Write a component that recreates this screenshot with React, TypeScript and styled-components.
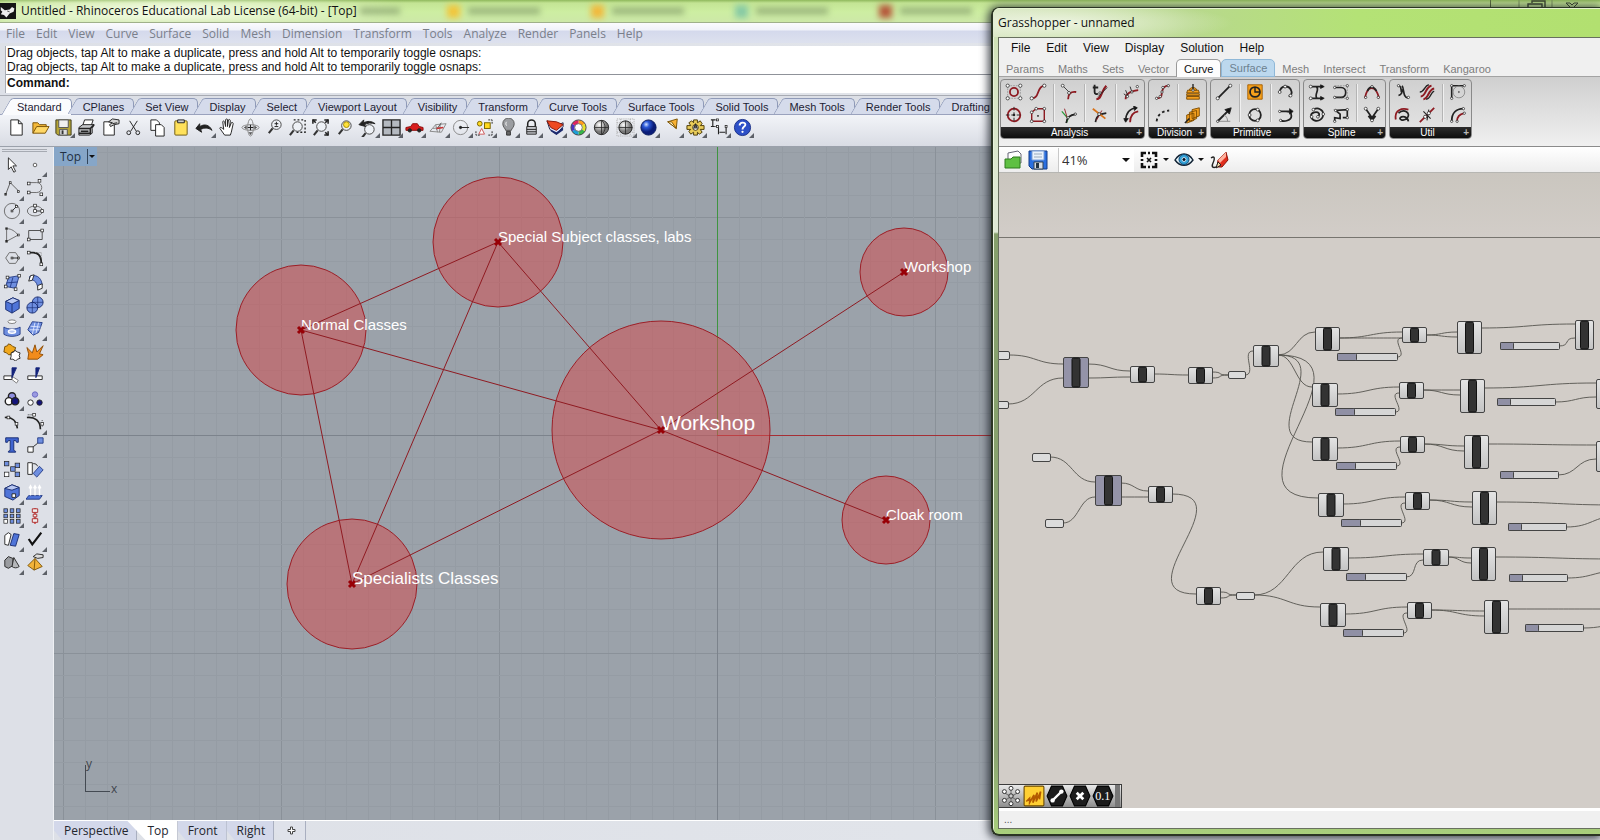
import React from "react";
import styled, { createGlobalStyle, css } from "styled-components";

const ui = `"Open Sans", "Noto Sans", sans-serif`;
const arial = `"Liberation Sans", Arial, sans-serif`;

const Global = createGlobalStyle`
  *, *::before, *::after { box-sizing: border-box; }
  body { margin: 0; background: #dde0e7; font-family: ${arial}; color: #111; }
  button, input, select { font: inherit; color: inherit; border: 0; padding: 0; margin: 0; background: none; }
`;

/* ---------- icons ---------- */

const Svg = styled.svg<{ $size?: number }>`
  display: block;
  flex: none;
  width: ${(p) => p.$size ?? 20}px;
  height: ${(p) => p.$size ?? 20}px;
`;

const Icon = ({ children, size }: { children: React.ReactNode; size?: number }) => (
  <Svg viewBox="0 0 20 20" $size={size} fill="none" stroke="#222" strokeWidth={1} aria-hidden="true">
    {children}
  </Svg>
);

const Dots = ({ at, r = 1.3, fill = "#fff" }: { at: number[][]; r?: number; fill?: string }) => (
  <>
    {at.map(([x, y], i) => (
      <circle key={i} cx={x} cy={y} r={r} fill={fill} stroke="#222" strokeWidth={0.8} />
    ))}
  </>
);

const Sq = ({ at, s = 3, fill = "#fff" }: { at: number[][]; s?: number; fill?: string }) => (
  <>
    {at.map(([x, y], i) => (
      <rect key={i} x={x - s / 2} y={y - s / 2} width={s} height={s} fill={fill} stroke="#222" strokeWidth={0.8} />
    ))}
  </>
);

const Lens = ({ x = 11, y = 8 }: { x?: number; y?: number }) => (
  <>
    <circle cx={x} cy={y} r={5} fill="#eef1f6" stroke="#444" />
    <path d={`M${x - 4} ${y + 4}L${x - 8} ${y + 9}`} stroke="#333" strokeWidth={2.2} />
  </>
);

type Tool = { name: string; art: React.ReactNode; more?: boolean };

const standardTools: Tool[] = [
  { name: "New", art: <path d="M4 2h8l4 4v12H4zM12 2v4h4" fill="#fff" /> },
  {
    name: "Open",
    art: (
      <>
        <path d="M2 16V5h5l2 2h7v3" fill="#f5b93a" stroke="#7a5206" />
        <path d="M2 16l4-7h13l-4 7z" fill="#ffd766" stroke="#7a5206" />
      </>
    ),
  },
  {
    name: "Save",
    more: true,
    art: (
      <>
        <path d="M2 2h16v16H4l-2-2z" fill="#b5a436" stroke="#3c3a1c" />
        <path d="M5 2h10v8H5z" fill="#f0f0ee" stroke="#555" />
        <path d="M6 12h8v6H6z" fill="#ddd" stroke="#555" />
        <path d="M8 13h2v4H8z" fill="#333" stroke="none" />
      </>
    ),
  },
  {
    name: "Print",
    art: (
      <>
        <path d="M6 8l2-6h9l-2 6" fill="#fff" />
        <path d="M2 10l4-3h12l-2 4v5l-3 2H2z" fill="#c5c7ca" />
        <path d="M2 11h12l4-4M14 11v6M4 14h8M2 16h12" strokeWidth={1.6} />
      </>
    ),
  },
  {
    name: "Properties",
    art: (
      <>
        <path d="M3 4h11v14H3z" fill="#fff" />
        <path d="M8 4l4-3 7 1v4l-5 1-4 2-1-2 3-2z" fill="#d5d5d5" />
        <path d="M12 6l5-1" />
      </>
    ),
  },
  {
    name: "Cut",
    art: (
      <>
        <path d="M6 3l7 11M14 3L7 14" />
        <circle cx={5} cy={15.5} r={2} />
        <circle cx={14.5} cy={15.5} r={2} />
      </>
    ),
  },
  { name: "Copy", art: <><path d="M3 2h6l3 3v8H3z" fill="#fff" /><path d="M8 7h6l3 3v9H8z" fill="#fff" /></> },
  {
    name: "Paste",
    art: (
      <>
        <rect x={4} y={3} width={13} height={15} rx={1} fill="#ffe15a" stroke="#6d5a12" />
        <path d="M7 2h7v3H7z" fill="#ccc" />
      </>
    ),
  },
  { name: "Undo", more: true, art: <path d="M2 11l4-5v3c5-3 10-2 13 4-4-3-8-3-12-1l1 3z" fill="#222" /> },
  {
    name: "Pan",
    art: <path d="M7 18l-5-7c0-2 2-1 4 1L5 4c1-2 2-1 3 5V2c1-2 2-1 2 0v7l1-7c1-1 2 0 2 1l-1 7 2-5c1-1 2 0 2 1l-2 9-1 3z" fill="#fff" />,
  },
  {
    name: "Rotate View",
    art: (
      <>
        <ellipse cx={10} cy={10} rx={9} ry={3} stroke="#888" />
        <ellipse cx={10} cy={10} rx={3} ry={9} stroke="#888" />
        <path d="M10 7v6M7 10h6" strokeWidth={1.2} />
        <path d="M6 8l-3 2 3 2M14 8l3 2-3 2M8 15l2 3 2-3" fill="#555" stroke="none" />
      </>
    ),
  },
  { name: "Zoom Dynamic", art: <><Lens x={12} y={7} /><path d="M10 6h4M12 4v4M10 9h4" /></> },
  { name: "Zoom Window", art: <><path d="M6 2h12v13H9" strokeDasharray="2 2" strokeWidth={1.4} /><Lens x={10} y={9} /></> },
  {
    name: "Zoom Extents",
    art: (
      <>
        <Lens x={11} y={9} />
        <path d="M2 6V2h4M14 2h4v4M18 14v4h-4" strokeWidth={1.6} />
        <path d="M2 2l3 3M18 2l-3 3M18 18l-3-3" strokeWidth={1.6} />
      </>
    ),
  },
  { name: "Zoom Selected", art: <><Lens x={12} y={8} /><circle cx={12} cy={7} r={3} fill="#ffe23c" stroke="#a58a00" /></> },
  { name: "Undo View", more: true, art: <><Lens x={12} y={12} /><path d="M1 7l5-5v3c4-2 8-2 12 1-4-1-8-1-11 1l1 2z" fill="#222" /></> },
  { name: "Viewports", more: true, art: <path d="M1 2h18v16H1zM10 2v16M1 10h18" fill="#b4b9c0" strokeWidth={1.4} /> },
  {
    name: "Named Views",
    more: true,
    art: (
      <>
        <path d="M1 10l5-1 2-3h5l2 3 4 1v3H1z" fill="#d81e1e" stroke="#8c0d0d" />
        <circle cx={5} cy={13} r={1.8} fill="#222" />
        <circle cx={15} cy={13} r={1.8} fill="#222" />
      </>
    ),
  },
  {
    name: "CPlane",
    more: true,
    art: (
      <>
        <path d="M1 14l6-7 11-1-5 9zM4 11l11-1M7 7l2 8M12 6l-1 9" stroke="#888" />
        <path d="M8 12l5-7" stroke="#555" />
        <path d="M8 11l7-1" stroke="#c33" strokeWidth={1.6} />
      </>
    ),
  },
  { name: "Object Snap", more: true, art: <><circle cx={9} cy={10} r={7.5} stroke="#888" /><path d="M9 10h9" /><circle cx={9} cy={10} r={1.2} fill="#222" /></> },
  {
    name: "Select Objects",
    more: true,
    art: (
      <>
        <circle cx={5} cy={6} r={2.5} fill="#ffd91f" stroke="#776300" />
        <rect x={10} y={5} width={6} height={6} fill="#ffd91f" stroke="#776300" />
        <path d="M7 11l3 6H4z" stroke="#c55" fill="#fff" />
        <path d="M14 2h4v4M1 14v4h4M18 14v4h-4" strokeDasharray="2 1" />
      </>
    ),
  },
  {
    name: "Hide",
    more: true,
    art: (
      <>
        <path d="M7 13c0-2-3-3-3-7a6 6 0 0 1 12 0c0 4-3 5-3 7z" fill="#9b9da1" stroke="#555" />
        <path d="M8 14h4v4H8z" fill="#666" stroke="#333" />
        <path d="M8 4c-1 1-1 3 0 4" stroke="#fff" />
      </>
    ),
  },
  { name: "Lock", more: true, art: <><path d="M6 9V6a4 4 0 0 1 8 0v3" strokeWidth={1.6} /><path d="M5 9h10v8H5zM5 12h10M5 14.5h10" fill="#c9cbd0" /></> },
  {
    name: "Layers",
    more: true,
    art: (
      <>
        <path d="M1 3l10 5 7-3v4l-7 8L4 12z" fill="#dfe8ff" stroke="#224" />
        <path d="M1 3l10 1 7 3-7 6-6-3z" fill="#ee4a22" stroke="#8b1707" />
        <path d="M5 12l6 3 7-5v3l-7 5-6-4z" fill="#1c2a6d" stroke="none" />
      </>
    ),
  },
  {
    name: "Colors",
    more: true,
    art: (
      <g strokeWidth={3.4}>
        <path d="M10 4a6 6 0 0 1 5.2 3" stroke="#ff9d1e" />
        <path d="M15.2 7a6 6 0 0 1 0 6" stroke="#e5e12a" />
        <path d="M15.2 13A6 6 0 0 1 10 16" stroke="#37b54a" />
        <path d="M10 16a6 6 0 0 1-5.2-3" stroke="#1c9fd6" />
        <path d="M4.8 13a6 6 0 0 1 0-6" stroke="#4a34c4" />
        <path d="M4.8 7A6 6 0 0 1 10 4" stroke="#e0245e" />
        <circle cx={10} cy={10} r={8} strokeWidth={0.8} />
        <circle cx={10} cy={10} r={4} strokeWidth={0.6} fill="#fff" />
      </g>
    ),
  },
  {
    name: "Shaded",
    art: (
      <>
        <circle cx={10} cy={10} r={7.5} fill="url(#greyBall)" />
        <path d="M10 2.5v15M2.5 10h15M10 2.5c5 4 5 11 0 15" strokeWidth={0.8} />
      </>
    ),
  },
  {
    name: "Ghosted",
    more: true,
    art: (
      <>
        <path d="M1 1h18v18H1zM1 5h18M1 10h18M1 15h18M5 1v18M15 1v18" stroke="#aaa" strokeDasharray="1 1" />
        <circle cx={10} cy={10} r={7} fill="url(#greyBall)" />
        <path d="M10 3v14M3 10h14" strokeWidth={0.8} />
      </>
    ),
  },
  { name: "Render", more: true, art: <circle cx={10} cy={10} r={8} fill="url(#blueBall)" stroke="#0a1a5c" /> },
  { name: "Lights", more: true, art: <><path d="M5 4L15 1l-1 10z" fill="#f9b233" stroke="#7b5200" /><path d="M5 4l4 0 5 7z" fill="#fff2c4" stroke="#7b5200" /></> },
  {
    name: "Options",
    more: true,
    art: (
      <>
        <path d="M8 2h4v3l3-2 2 3-2 2h4v4h-4l2 3-3 2-2-2v3H8v-3l-3 2-2-3 2-2H1V8h4L3 5l3-2 2 2z" fill="#e9cc5a" stroke="#4b3a05" />
        <circle cx={10} cy={10} r={3} fill="#f7f7f7" stroke="#4b3a05" />
        <path d="M8 11l2-5 2 5" fill="#555" />
      </>
    ),
  },
  {
    name: "Dimension",
    more: true,
    art: <><path d="M2 2h5M4 2v7M2 9h4M10 9v8M18 9v8M11 15h6" strokeWidth={1.2} /><path d="M6 9h4" strokeDasharray="1 1" /><Sq s={2} at={[[9, 2], [9, 9], [18, 9]]} /></>,
  },
  {
    name: "Help",
    more: true,
    art: (
      <>
        <circle cx={10} cy={10} r={8.5} fill="#2d50c8" stroke="#1a2f86" />
        <path d="M7 8c0-4 6-4 6-1 0 2-3 2-3 5" stroke="#fff" strokeWidth={2} />
        <circle cx={10} cy={14.5} r={1.2} fill="#fff" stroke="none" />
      </>
    ),
  },
];

const blue = "#6f8fe0";
const pale = "#b9c8f2";

const sideTools: Tool[] = [
  { name: "Pointer", art: <path d="M6 2v13l3-3 3 6 2-1-3-6h4z" fill="#fff" /> },
  { name: "Point", more: true, art: <circle cx={10} cy={10} r={2} fill="#fff" stroke="#555" /> },
  { name: "Polyline", more: true, art: <><path d="M3 17L8 4l10 10" stroke="#555" /><Sq s={2} at={[[3, 17], [8, 4], [17, 14]]} /></> },
  { name: "Curve", more: true, art: <><path d="M4 4h8a5 5 0 0 1 0 11H4" stroke="#666" /><Sq at={[[3, 5], [3, 15], [15, 2], [17, 17]]} /></> },
  { name: "Circle", more: true, art: <><circle cx={10} cy={10} r={8.5} stroke="#666" /><path d="M10 10l5-5" /><Sq s={2} at={[[10, 10], [15, 5]]} /></> },
  { name: "Ellipse", more: true, art: <><ellipse cx={10} cy={10} rx={8.5} ry={5.5} stroke="#666" /><path d="M10 10V5M10 10h8" /><Sq at={[[10, 4], [10, 10], [18, 10]]} /></> },
  { name: "Arc", more: true, art: <><path d="M4 17V3M4 3c6 0 9 3 13 7L4 17" stroke="#666" /><Sq s={2} at={[[4, 3], [17, 10], [4, 17]]} /></> },
  { name: "Rectangle", more: true, art: <><path d="M3 5h15v10H3z" stroke="#444" /><Sq at={[[18, 5], [3, 15]]} /></> },
  { name: "Polygon", more: true, art: <><path d="M3 10l4-6h7l4 6-4 6H7z" stroke="#666" /><path d="M10 10h7" /><Sq s={2} at={[[10, 10], [17, 10]]} /></> },
  { name: "Fillet", more: true, art: <><path d="M4 4h4c6 0 9 4 9 12" strokeWidth={2} /><path d="M10 4h7v6" stroke="#888" strokeDasharray="1 1" /><Sq at={[[3, 4], [17, 17]]} /></> },
  { name: "Surface Corners", more: true, art: <><path d="M6 5l12-2-4 14-11-2z" fill={blue} stroke="#223a86" /><path d="M4 11l12-1M11 5L8 16" stroke="#223a86" /><Sq at={[[5, 5], [18, 3], [3, 15], [14, 18]]} /></> },
  { name: "Sweep", more: true, art: <><path d="M4 4C10 1 17 4 18 13l-5 3C12 9 8 7 4 8z" fill={blue} stroke="#223a86" /><path d="M3 9l2-6 4-1-2 6zM13 19v-5l5-2v5z" fill="#fff" /></> },
  { name: "Box", more: true, art: <><path d="M3 6l8-4 7 3v9l-8 5-7-4z" fill="#4f74d8" stroke="#162a6e" /><path d="M3 6l8-4 7 3-8 4z" fill={pale} stroke="#162a6e" /><path d="M10 9v10" stroke="#162a6e" /></> },
  { name: "Boolean", more: true, art: <><circle cx={13} cy={7} r={6} fill={blue} stroke="#162a6e" /><circle cx={7} cy={13} r={6} fill={blue} stroke="#162a6e" /><path d="M1 13h12M7 7v12M13 1v12M7 7h12" stroke="#162a6e" strokeWidth={0.7} /></> },
  { name: "Patch", more: true, art: <><ellipse cx={10} cy={3} rx={4.5} ry={2} fill="#fff" stroke="#777" /><path d="M1 9c5 3 13 3 18 0v8c-5 3-13 3-18 0z" fill={blue} stroke="#223a86" /><ellipse cx={10} cy={14} rx={4} ry={2} stroke="#fff" fill={pale} strokeWidth={1.6} /></> },
  { name: "Rebuild", more: true, art: <><path d="M2 12l5-9 11 1-4 11-6 3z" fill={blue} stroke="#223a86" /><path d="M5 8l11 1M4 12h11M10 4l-3 13M14 4l-3 12" stroke="#dfe6ff" /></> },
  { name: "Join", art: <><path d="M2 4l3-1 1-2 3 1 2 2 3 1-1 4-3 1 0 3-4 0-2-2-3-1z" fill="#f0a81e" stroke="#6d4600" /><path d="M9 11l3-1 1-2 3 2 3 1-1 3 1 3-3 1-2 2-3-2-3 0 1-3z" fill="#fff" /></> },
  { name: "Explode", art: <path d="M2 18L3 12 1 5l6 6 3-9 2 8 7-7-4 9 4 1-6 5z" fill="#f28c1c" stroke="#8a4800" /> },
  { name: "Trim", art: <><path d="M1 11h9v4H1z" fill="#fff" /><path d="M11 12l6 4-2 3-5-4z" fill="#fff" stroke="#777" /><path d="M10 13V2h5z" fill="#14247a" stroke="#14247a" /></> },
  { name: "Split", art: <><path d="M2 11h16v4H2z" fill="#fff" /><path d="M11 13V2h4z" fill="#14247a" stroke="#14247a" /></> },
  { name: "Group", more: true, art: <><circle cx={10} cy={7} r={4} fill="#8f8fe0" strokeWidth={1.6} /><circle cx={6.5} cy={12.5} r={4} fill="#fff" strokeWidth={1.6} /><circle cx={13.5} cy={12.5} r={4} fill="#14147a" strokeWidth={1.6} /></> },
  { name: "Ungroup", art: <><circle cx={10} cy={5} r={3} fill="#9a9ae0" stroke="#6464c0" /><circle cx={5} cy={14} r={3} fill="#fff" /><circle cx={15} cy={14} r={3} fill="#14147a" /></> },
  { name: "Edit Points", art: <><path d="M2 5c8-1 13 4 14 12" strokeWidth={1.8} /><Sq at={[[6, 5], [15, 12]]} /></> },
  { name: "Control Points", more: true, art: <><path d="M1 5c9-1 15 4 15 13" strokeWidth={1.8} /><path d="M2 2h8M18 8v8" strokeDasharray="1 1" /><Sq at={[[9, 2], [18, 12]]} /></> },
  { name: "Text", art: <path d="M3 2h14v5h-2l-1-2h-2v11l2 1v1H6v-1l2-1V5H6L5 7H3z" fill="#3f64d0" stroke="#162a6e" /> },
  { name: "Move", more: true, art: <><path d="M2 12h6v6H2z" fill="#fff" /><path d="M13 2h6v6h-6z" fill={blue} stroke="#223a86" /><path d="M8 12l5-4" /></> },
  { name: "Copy Objects", art: <><Sq s={5} fill="#fff" at={[[4, 16]]} /><Sq s={5} fill={blue} at={[[4, 4], [16, 6], [11, 10], [16, 16]]} /></> },
  { name: "Rotate", art: <><path d="M2 3h5v13H2z" fill="#fff" /><path d="M8 15l7-8 4 4-7 8z" fill={blue} stroke="#223a86" /><path d="M8 4c3 0 4 1 5 3" /></> },
  { name: "Solid Edit", more: true, art: <><path d="M2 6l8-4 8 3v9l-7 5-9-4z" fill="#4f74d8" stroke="#162a6e" /><path d="M2 6l8-4 8 3-8 3z" fill={pale} stroke="#162a6e" /><path d="M10 12h4v4h-4z" fill="#fff" /></> },
  { name: "Project", more: true, art: <><path d="M3 14h15l-3 4H0z" fill="#4f74d8" stroke="#223a86" /><path d="M5 14V4M10 14V4M15 14V4M3.5 6L5 3l1.5 3M8.5 6L10 3l1.5 3M13.5 6L15 3l1.5 3" stroke="#fff" strokeWidth={1.5} /></> },
  { name: "Array", more: true, art: <><Sq s={4} fill={blue} at={[[3, 4], [10, 4], [17, 4], [3, 10], [10, 10], [17, 10], [10, 16], [17, 16]]} /><Sq s={4} at={[[3, 16]]} /></> },
  { name: "Align", more: true, art: <><path d="M10 1v18" stroke="#c22" strokeWidth={1.4} /><path d="M7 2h6v4H7zM8 8h4v3H8zM7 13h6v4H7z" fill="#eee" stroke="#a22" /></> },
  { name: "Flow", more: true, art: <><path d="M2 6l4-3 3 2-3 12-4-1z" fill="#fff" /><path d="M8 17l4-13 6 1-4 13z" fill="#4f74d8" stroke="#162a6e" /></> },
  { name: "Check", more: true, art: <path d="M3 10l4 6L17 3" strokeWidth={2.4} stroke="#111" /> },
  { name: "Mesh", more: true, art: <><path d="M2 8l4-4 5 2v8l-5 3-4-2z" fill="#9a9ca0" /><path d="M12 5l6 10c-2 2-6 2-8 0z" fill="#b5b7ba" /></> },
  { name: "Drape", more: true, art: <><path d="M10 6l8 9-9 4-7-5z" fill="#f2b33a" stroke="#7a5206" /><path d="M10 6l-1 13" stroke="#7a5206" /><path d="M8 4l4-3 7 1v3l-6 1z" fill="#ddd" /></> },
];

const red = "#8e1b22";
const K = 1.9;

const ribbonIcons: Record<string, React.ReactNode> = {
  frame: <><circle cx={10} cy={10} r={4.5} stroke={red} strokeWidth={2} /><path d="M3 3h14v14H3z" stroke="#999" strokeDasharray="2 1" /><Dots r={1.8} at={[[3, 3], [17, 3], [3, 17], [17, 17]]} /></>,
  circleCenter: <><circle cx={10} cy={10} r={7} stroke={red} strokeWidth={2} /><path d="M10 1v18M1 10h18" strokeDasharray="4 2" /><Dots r={1} fill="#111" at={[[10, 10]]} /></>,
  endPts: <><path d="M4 17c8 0 4-13 13-14" stroke={red} strokeWidth={2} /><Dots r={1.8} at={[[3, 17], [17, 3]]} /></>,
  polyCenter: <><path d="M3 17V7l5-4h9v14z" stroke={red} strokeWidth={1.6} /><Dots r={1.5} at={[[3, 17], [3, 7], [8, 3], [17, 3], [17, 17]]} /><Dots r={0.6} fill="#111" at={[[10, 11]]} /></>,
  closest: <><path d="M3 3l7 7" stroke="#333" /><path d="M9 18c0-6 3-9 9-8" stroke={red} strokeWidth={2} /><Dots r={1.6} at={[[3, 3], [10, 11]]} /></>,
  derive: <><path d="M2 6l7 8-2 5" stroke="#2a9a3c" strokeWidth={1.4} /><path d="M7 19c0-6 3-9 11-10" strokeWidth={K} /><path d="M8 13L5 3" stroke={red} /><Dots at={[[9, 13], [17, 9]]} /></>,
  evalCurve: <><path d="M4 2v8c0 2 2 3 4 2M2 5h6" strokeWidth={2} /><path d="M6 18c6 0 5-9 11-15" stroke={red} strokeWidth={2.4} /><path d="M8 15L18 5" /><Dots at={[[10, 11]]} /></>,
  perp: <><path d="M5 18c1-7 4-9 12-10" strokeWidth={K} /><path d="M2 3l14 11" stroke="#d8731a" strokeWidth={2} /><path d="M12 5L6 16" stroke={red} /><Dots r={1.6} at={[[9, 9]]} /></>,
  segs: <><path d="M4 18c0-6 5-9 14-10" stroke={red} strokeWidth={2} /><path d="M4 8l3 7M9 4l2 6M2 12l4 3" /><Dots at={[[11, 10], [17, 4], [6, 15]]} /></>,
  length: <><path d="M9 18c0-7 3-11 9-12" stroke={red} strokeWidth={2} /><path d="M4 17C4 8 8 3 16 2" strokeWidth={1.6} /><path d="M2 14l2 4 3-4zM13 0l4 2-3 3z" fill="#111" /></>,
  divide: <><path d="M4 17c7 0 5-4 6-7s1-7 8-7" stroke={red} strokeWidth={2} /><Dots at={[[4, 17], [8, 15], [10, 10], [11, 5], [17, 3]]} /></>,
  dash: <path d="M4 17c1-6 4-11 14-12" strokeWidth={2} strokeDasharray="3 3" />,
  contour: <><path d="M4 8h12l1 3H3zM3 12h14v2H3zM3 15h14v3H3z" fill="#f5a01e" stroke="#7a4b00" /><path d="M6 8c0-4 8-4 8 0z" fill="#f5a01e" stroke="#7a4b00" /><path d="M10 1v7" strokeWidth={1.5} /><Dots at={[[10, 8]]} /></>,
  frames: <><path d="M9 4l8-2v9l-8 3zM6 7l8-2v9l-8 3zM3 10l8-2v8l-8 3z" fill="#f5a01e" stroke="#7a4b00" /><path d="M1 19l5-5" strokeWidth={1.6} /></>,
  line: <><path d="M3 17L17 3" strokeWidth={2} /><Dots r={1.7} at={[[3, 17], [17, 3]]} /></>,
  lineSDL: <><path d="M3 17L16 4" strokeWidth={2.2} /><path d="M3 17h14M14 17c0-4-2-6-4-7" stroke="#888" /><path d="M18 2l-2 7-5-5z" fill="#111" /><Dots at={[[3, 17]]} /></>,
  clock: <><path d="M2 2h16v16H2z" fill="#f7a11b" stroke="#a35c00" /><circle cx={10} cy={10} r={5.5} strokeWidth={2} /><path d="M10 5v5h5" strokeWidth={1.6} /></>,
  circle3: <><circle cx={10} cy={10} r={6.5} strokeWidth={2} /><Dots r={1.6} at={[[4, 10], [13, 4], [13, 16]]} /></>,
  arc3: <><path d="M3 10c1-8 11-8 13-1 1 3-1 5-3 6" strokeWidth={2} /><Dots r={1.6} at={[[3, 10], [15, 14], [9, 4]]} /></>,
  arcTan: <><path d="M3 6h12M4 16c4 2 12 0 12-5S13 6 10 6" strokeWidth={2} /><path d="M14 3l4 3-4 3z" fill="#111" /><Dots at={[[3, 6], [4, 16]]} /></>,
  sdl: <><path d="M4 4h12M4 17h12M9 4c5 3-3 9 1 13" strokeWidth={K} /><Dots r={1.6} at={[[3, 4], [3, 17]]} /><path d="M14 2l4 2-4 2zM14 15l4 2-4 2z" fill="#111" /></>,
  knot: <><path d="M6 4c5-3 11 0 11 5s-5 9-10 7-5-8 0-9 7 2 4 5" strokeWidth={K} /><Dots r={1.5} at={[[6, 4], [17, 9], [4, 12], [11, 12]]} /></>,
  bezier: <><path d="M3 5h7c7 0 7 11 0 11H3" strokeWidth={K} /><path d="M3 3h14v14H3" stroke="#999" strokeDasharray="2 1" /><Dots at={[[3, 5], [3, 16], [17, 3], [17, 17]]} /></>,
  polyline: <><path d="M3 17v-4l6 1V9L4 5l13-1v9h-5" strokeWidth={K} /><Dots at={[[3, 17], [4, 5], [17, 4], [17, 13]]} /></>,
  catenary: <><path d="M2 17C5 2 14 2 18 17" stroke={red} strokeWidth={2} /><path d="M5 9c2-6 7-6 10 0" strokeWidth={2} /><Dots at={[[3, 16], [17, 16], [10, 4]]} /></>,
  tanArc: <><path d="M3 3l7 10 7-10M6 11l4 5 4-5" strokeWidth={K} /><Dots r={1.6} at={[[3, 3], [17, 3], [10, 16]]} /></>,
  flip: <><path d="M5 3c5 1 1 5 4 8M5 14c3-1 5-4 4-7M9 3c3 4 0 13 7 14" strokeWidth={1.8} /><Dots at={[[5, 3], [16, 16]]} /></>,
  offset: <><path d="M3 15c6 0 5-11 12-12M6 18c6 0 5-11 12-12" stroke={red} strokeWidth={2.2} /><path d="M2 10c5 0 5-7 10-8M9 18c5 0 5-8 9-9" strokeWidth={1.6} /></>,
  spiral: <><path d="M2 15C0 4 9 2 16 4" stroke={red} strokeWidth={2} /><path d="M5 8c6-6 14 0 10 5s-10 2-8 0 8-2 9 4" strokeWidth={K} /></>,
  join: <><path d="M2 18L18 2" stroke={red} strokeWidth={2} /><path d="M6 6l8 8M12 4l-2 12" strokeWidth={1.2} /><Dots r={1.8} at={[[8, 12], [12, 8]]} /></>,
  fillet: <><path d="M3 17V3h14" strokeWidth={1.8} /><circle cx={11} cy={10} r={6.5} stroke="#888" /><Dots at={[[3, 17], [3, 3], [17, 3]]} /><Dots r={0.6} at={[[11, 10]]} /></>,
  offsetCrv: <><path d="M3 17C3 8 8 3 16 3" strokeWidth={2} /><path d="M9 17c0-6 3-8 8-9" stroke={red} strokeWidth={2} /><Dots at={[[3, 17], [16, 3], [9, 17], [17, 8]]} /></>,
};

const ribbon = [
  { name: "Analysis", cols: [["frame", "circleCenter"], ["endPts", "polyCenter"], null, ["closest", "derive"], null, ["evalCurve", "perp"], null, ["segs", "length"]] },
  { name: "Division", cols: [["divide", "dash"], null, ["contour", "frames"]] },
  { name: "Primitive", cols: [["line", "lineSDL"], null, ["clock", "circle3"], null, ["arc3", "arcTan"]] },
  { name: "Spline", cols: [["sdl", "knot"], ["bezier", "polyline"], null, ["catenary", "tanArc"]] },
  { name: "Util", cols: [["flip", "spiral"], ["offset", "join"], null, ["fillet", "offsetCrv"]] },
] as { name: string; cols: (string[] | null)[] }[];

/* ---------- Rhino window ---------- */

const Desktop = styled.div`
  position: relative;
  display: flex;
  flex-direction: column;
  min-height: 100vh;
  overflow: hidden;
  background: linear-gradient(90deg, #dde0e7, #e4e7ec);
`;

const TitleBar = styled.header`
  position: relative;
  display: flex;
  align-items: center;
  gap: 5px;
  height: 22px;
  font: 12px/22px ${ui};
  overflow: hidden;
  background: linear-gradient(180deg, #8fb85c 0, #c3e494 3px, #cdeea2 12px, #cde8a8 100%);
`;

const Haze = styled.div`
  position: absolute;
  inset: 0;
  display: flex;
  align-items: center;
  padding-left: 303px;
  filter: blur(3px);
  background: radial-gradient(ellipse 240px 30px at 170px 12px, #f6fbe9, transparent);
`;

const HazeTab = styled.div<{ $color: string }>`
  display: flex;
  align-items: center;
  flex: none;
  gap: 8px;
  width: 144px;
  &::before { content: ""; width: 13px; height: 13px; background: ${(p) => p.$color}; }
`;

const HazeBar = styled.i<{ $lead?: boolean }>`
  width: ${(p) => (p.$lead ? 40 : 72)}px;
  margin-left: ${(p) => (p.$lead ? 36 : 0)}px;
  height: 6px;
  background: #94ae78;
`;

const TitleText = styled.h1`
  position: relative;
  margin: 0;
  font: inherit;
`;

const LogoBox = styled.span`
  position: relative;
  background: #151515;
`;

const MenuBar = styled.nav`
  display: flex;
  align-items: center;
  gap: 11px;
  height: 21px;
  padding: 2px 0 0 6px;
  font: 12px/18px ${ui};
  color: #7a7f8b;
  border-top: 1px solid #9fb08a;
  background: linear-gradient(180deg, #fbfbfd 0, #f0f2f9 7px, #d4d9ec 8px, #dde1ee 100%);
`;

const MenuItem = styled.button`
  white-space: nowrap;
`;

const CommandArea = styled.section`
  margin: 3px 0 2px 5px;
  border-left: 1px solid #a9adb5;
  background: #fff;
  font: 12px/14px ${arial};
`;

const History = styled.div`
  padding: 0 0 0 1px;
  border-bottom: 1px solid #8f9299;
  p { margin: 0; }
`;

const Prompt = styled.label`
  display: flex;
  gap: 4px;
  height: 18px;
  padding-left: 1px;
  font-weight: 700;
  line-height: 16px;
  input { flex: 1; outline: 0; font-weight: 400; }
`;

const TabStrip = styled.div`
  display: flex;
  align-items: flex-end;
  height: 20px;
  padding-left: 4px;
  border-top: 1px solid #a8abb3;
  background: #dcdfe6;
  box-shadow: inset 0 -1px #9aa2bd;
`;

const ToolTab = styled.button<{ $active?: boolean }>`
  position: relative;
  isolation: isolate;
  flex: none;
  height: 17px;
  padding: 0 8px 0 13px;
  font: 11px/18px ${arial};
  color: #1d2233;
  &::before, &::after {
    content: "";
    position: absolute;
    z-index: -1;
    top: 0;
    bottom: ${(p) => (p.$active ? 0 : 1)}px;
    border-top: 1px solid #8f9ab8;
    background: ${(p) => (p.$active ? "#fafbfd" : "#d5dbeb")};
  }
  &::before {
    left: 2px;
    width: 20px;
    border-left: 1px solid #8f9ab8;
    border-top-left-radius: 3px;
    transform: skewX(-30deg);
  }
  &::after {
    left: 14px;
    right: -2px;
    border-right: 1px solid #8f9ab8;
    border-top-right-radius: 5px;
  }
`;

const ToolRow = styled.div`
  display: grid;
  grid-template-columns: repeat(32, 1fr);
  align-items: center;
  width: 749px;
  height: 31px;
  margin: 0 0 0 5px;
  padding-bottom: 6px;
`;

const ToolRowBand = styled.div`
  border-bottom: 1px solid #9ba1ab;
  background: linear-gradient(180deg, #f2f4f8, #d9dce4);
`;

const ToolButton = styled.button<{ $more?: boolean }>`
  position: relative;
  display: grid;
  place-items: center;
  ${(p) =>
    p.$more &&
    css`
      &::after {
        content: "";
        position: absolute;
        right: 0;
        bottom: -1px;
        border: solid transparent;
        border-width: 0 0 5px 5px;
        border-bottom-color: #5d6168;
      }
    `}
`;

const WorkArea = styled.main`
  flex: 1;
  display: flex;
  min-height: 0;
`;

const SideBar = styled.aside`
  flex: none;
  width: 54px;
  padding: 2px 6px 0 0;
  border-right: 1px solid #eef0f4;
  background: #dde0e7;
`;

const Grip = styled.div`
  height: 3px;
  margin: 0 0 1px 2px;
  border: solid #a6aab2;
  border-width: 1px 0;
`;

const SideGrid = styled.div`
  display: grid;
  grid-template-columns: 1fr 1fr;
  grid-template-rows: repeat(18, 1fr);
  height: 421px;
`;

const ViewColumn = styled.div`
  flex: 1;
  display: flex;
  flex-direction: column;
  min-width: 0;
`;

const Viewport = styled.div`
  position: relative;
  flex: 1;
  background: #9ba2aa;
`;

const Scene = styled.svg`
  position: absolute;
  inset: 0;
  width: 100%;
  height: 100%;
  font-family: ${arial};
`;

const ViewName = styled.button`
  position: absolute;
  top: 0;
  left: 0;
  display: flex;
  align-items: center;
  height: 19px;
  padding: 0 2px 0 6px;
  font: 12px/19px ${ui};
  color: #222f42;
  background: #86a6c8;
  &::after {
    content: "";
    height: 15px;
    margin: 0 1px 0 6px;
    border-left: 1px solid #33465c;
  }
`;

const Caret = styled.i<{ $size?: number }>`
  order: 2;
  flex: none;
  border: solid transparent;
  border-width: ${(p) => p.$size ?? 3}px ${(p) => p.$size ?? 3}px 0;
  border-top-color: #111;
`;

const ViewTabs = styled.div`
  display: flex;
  height: 20px;
  border-top: 1px solid #fff;
`;

const ViewTab = styled.button<{ $active?: boolean }>`
  flex: none;
  padding: 0 8px 0 10px;
  font: 12px/19px ${ui};
  color: #23262e;
  border-right: 1px solid #a9afc0;
  background: ${(p) => (p.$active ? "#fff" : "#d3d8ea")};
  clip-path: polygon(0 0, 100% 0, 100% 100%, 8px 100%, 0 50%);
  ${(p) =>
    p.$active &&
    css`
      margin-left: -10px;
      padding-left: 20px;
      clip-path: polygon(0 0, 100% 0, 100% 100%, 18px 100%);
    `}
`;

const AddTab = styled(ViewTab)`
  padding: 0 9px 0 13px;
  background: #dfe2ea;
`;

/* ---------- Grasshopper window ---------- */

const Hopper = styled.section`
  position: absolute;
  top: 7px;
  right: 0;
  bottom: 4px;
  left: calc(62% - 1px);
  display: flex;
  flex-direction: column;
  padding: 0 0 5px 5px;
  border: solid #2b3524;
  border-width: 1px 0 2px 2px;
  border-radius: 8px 0 0 8px;
  background: linear-gradient(180deg, #c9dfa8 0, #d6e5c2 60px, #dfe9d5 200px, #dfe9d5 224px, #86a06c 226px, #8aa470 90%, #a9cf7c 100%);
  box-shadow: inset 1px 1px 0 #e9f4dc, -1px 1px 8px 2px rgba(20, 26, 34, 0.75);
`;

const HopperTitle = styled.header`
  flex: none;
  height: 29px;
  padding: 0 0 0 1px;
  margin-left: -5px;
  border-radius: 7px 0 0 0;
  font: 12px/28px ${ui};
  background:
    radial-gradient(ellipse 180px 22px at 60px 14px, rgba(244, 248, 236, 0.85), transparent),
    linear-gradient(90deg, #d3e3bb 0, #b8d88d 32%, #b4e276 60%, #b2e070 100%);
  border-top: 1px solid #e4f2d0;
  h2 { margin: 0 0 0 4px; font: inherit; }
`;

const HopperBody = styled.div`
  flex: 1;
  display: flex;
  flex-direction: column;
  min-height: 0;
  border: solid #68705f;
  border-width: 1px 0 1px 1px;
  background: #f0f0f0;
`;

const HopperMenu = styled.nav`
  display: flex;
  gap: 16px;
  height: 21px;
  padding: 0 0 0 12px;
  font: 12px/21px ${arial};
  color: #111;
`;

const HopperTabs = styled.div`
  display: flex;
  align-items: flex-end;
  height: 18px;
  box-shadow: inset 0 -1px #a3a3a3;
`;

const HopperTab = styled.button<{ $tone?: "active" | "hover" }>`
  height: 18px;
  padding: 0 6px;
  font: 11px/16px ${arial};
  color: #7d7d7d;
  border: 1px solid transparent;
  border-bottom: 0;
  border-radius: 5px 5px 0 0;
  ${(p) =>
    p.$tone === "active" &&
    css`
      padding: 0 7px;
      color: #111;
      background: #fdfdfd;
      border-color: #9a9a9a;
      line-height: 14px;
    `}
  ${(p) =>
    p.$tone === "hover" &&
    css`
      padding: 0 7px;
      background: #bcd8ee;
      border: 1px solid #8fb8d8;
      color: #6c8190;
    `}
`;

const Ribbon = styled.div`
  display: flex;
  gap: 3px;
  height: 70px;
  padding: 2px 0 7px 1px;
  border-bottom: 1px solid #8b8b8b;
  background: linear-gradient(180deg, #cfcfcf, #f0f0f0);
`;

const Group = styled.div`
  flex: none;
  display: flex;
  flex-direction: column;
  border: 1px solid #8a8a8a;
  border-radius: 4px;
  background: linear-gradient(180deg, #d0d0d0, #e6e6e6);
  overflow: hidden;
`;

const GroupIcons = styled.div`
  flex: 1;
  display: flex;
  padding: 0 1px 1px;
`;

const IconColumn = styled.div`
  display: flex;
  flex-direction: column;
  justify-content: space-around;
  width: 24px;
`;

const RibbonButton = styled.button`
  display: grid;
  place-items: center;
  height: 23px;
`;

const Rule = styled.i`
  width: 1px;
  margin: 4px 3px;
  background: #b4b4b4;
  box-shadow: 1px 0 #f0f0f0;
`;

const GroupName = styled.div`
  display: flex;
  height: 11px;
  padding: 0 2px 0 2px;
  font: 10px/11px ${arial};
  color: #fff;
  background: linear-gradient(180deg, #2c2c2c, #0d0d0d);
  span { flex: 1; text-align: center; }
  b { color: #b8b8b8; }
`;

const CanvasBar = styled.div`
  display: flex;
  align-items: center;
  height: 26px;
  padding-left: 4px;
  gap: 5px;
  border-bottom: 1px solid #b6b6b2;
  background: linear-gradient(180deg, #fff, #ededed);
`;

const BarButton = styled.button`
  display: flex;
  align-items: center;
  gap: 4px;
`;

const ZoomBox = styled.span`
  position: relative;
  display: flex;
  align-items: center;
  width: 76px;
  height: 24px;
  margin-left: 5px;
  background: #fff;
  border-left: 1px solid #c9c9c9;
  select {
    width: 100%;
    padding-left: 3px;
    appearance: none;
    outline: 0;
    font: 13px/20px ${ui};
    color: #333;
  }
  i { position: absolute; right: 4px; pointer-events: none; }
`;

const Canvas = styled.div`
  position: relative;
  flex: 1;
  min-height: 0;
  background: linear-gradient(180deg, #cac6bf 0, #d2cdc8 64px);
  border-bottom: 3px solid #fff;
`;

const Gadget = styled.div`
  position: absolute;
  left: 0;
  bottom: 0;
  display: flex;
  align-items: center;
  gap: 1px;
  height: 24px;
  padding: 0 1px;
  border: solid #3c3c3c;
  border-width: 1px 1px 1px 0;
  background: linear-gradient(180deg, #e9e9e9, #8e8e8e);
  &::after { content: ""; align-self: stretch; width: 5px; background: #777; }
`;

const Status = styled.footer`
  height: 17px;
  padding-left: 5px;
  font: 10px/18px ${arial};
  color: #555;
`;

const BackControls = styled.div`
  position: absolute;
  top: 0;
  right: 0;
  display: flex;
  height: 7px;
  width: 110px;
  overflow: hidden;
  border-left: 1px solid #5d7040;
`;

/* ---------- data ---------- */

const rhinoMenus = ["File", "Edit", "View", "Curve", "Surface", "Solid", "Mesh", "Dimension", "Transform", "Tools", "Analyze", "Render", "Panels", "Help"];
const toolTabs = ["Standard", "CPlanes", "Set View", "Display", "Select", "Viewport Layout", "Visibility", "Transform", "Curve Tools", "Surface Tools", "Solid Tools", "Mesh Tools", "Render Tools", "Drafting"];
const hopperMenus = ["File", "Edit", "View", "Display", "Solution", "Help"];
const hopperTabs = ["Params", "Maths", "Sets", "Vector", "Curve", "Surface", "Mesh", "Intersect", "Transform", "Kangaroo"];

const rooms = [
  { x: 247, y: 183, r: 65, label: "Normal Classes", size: 15 },
  { x: 444, y: 95, r: 65, label: "Special Subject classes, labs", size: 15 },
  { x: 298, y: 437, r: 65, label: "Specialists Classes", size: 17 },
  { x: 607, y: 283, r: 109, label: "Workshop", size: 21 },
  { x: 850, y: 125, r: 44, label: "Workshop", size: 15 },
  { x: 832, y: 373, r: 44, label: "Cloak room", size: 15 },
];
const links = [[0, 1], [0, 3], [0, 2], [1, 3], [1, 2], [2, 3], [3, 4], [3, 5]];

const ORIGIN = { x: 663, y: 288 };
const CELL = 21.8;
const gridLines = Array.from({ length: 140 }, (_, i) => i - 60);

type Box = [number, number, number, number];

const capsules: Box[] = [
  [131, 193, 24, 16], [189, 194, 24, 16], [254, 172, 25, 21], [149, 313, 24, 16], [197, 414, 24, 17],
];
const clusters: Box[] = [[64, 184, 25, 30], [96, 302, 26, 30]];
const params: Box[] = [[-8, 178, 18, 8], [-8, 228, 17, 7], [229, 198, 17, 7], [33, 280, 18, 8], [46, 346, 18, 8], [237, 419, 18, 7]];

const rows: { a: Box; m: Box; s: Box; t: Box; s2: Box; out: number; end: number[]; end2: number[]; e?: Box }[] = [
  { a: [316, 154, 24, 23], m: [403, 154, 24, 15], s: [338, 180, 60, 7], t: [458, 148, 24, 32], s2: [501, 169, 59, 7], out: 155, end: [576, 151], end2: [576, 165], e: [576, 147, 18, 29] },
  { a: [313, 210, 25, 23], m: [400, 209, 24, 16], s: [336, 235, 60, 7], t: [461, 206, 24, 33], s2: [498, 225, 58, 7], out: 215, end: [597, 210], end2: [597, 224], e: [597, 206, 25, 29] },
  { a: [313, 264, 25, 23], m: [401, 263, 24, 16], s: [337, 289, 60, 7], t: [465, 262, 24, 33], s2: [501, 298, 58, 7], out: 271, end: [597, 272], end2: [597, 286], e: [597, 268, 25, 30] },
  { a: [319, 320, 25, 23], m: [406, 319, 24, 17], s: [342, 346, 60, 7], t: [473, 318, 24, 33], s2: [509, 350, 58, 7], out: 329, end: [620, 332], end2: [620, 343] },
  { a: [324, 374, 25, 23], m: [424, 376, 25, 16], s: [347, 400, 60, 7], t: [472, 374, 24, 33], s2: [510, 401, 58, 7], out: 384, end: [620, 386], end2: [620, 398] },
  { a: [321, 430, 25, 23], m: [408, 429, 24, 16], s: [344, 456, 60, 7], t: [485, 427, 24, 33], s2: [526, 451, 58, 7], out: 436, end: [620, 436], end2: [620, 452] },
];

const wire = (x1: number, y1: number, x2: number, y2: number, pull = Math.max(Math.abs(x2 - x1) / 2, 12)) =>
  `M${x1} ${y1}C${x1 + pull} ${y1} ${x2 - pull} ${y2} ${x2} ${y2}`;

const wires = [
  wire(10, 182, 64, 191), wire(9, 231, 64, 205),
  wire(89, 191, 131, 198), wire(89, 205, 131, 204),
  wire(155, 201, 189, 202), wire(213, 199, 229, 202), wire(213, 205, 229, 202),
  wire(246, 202, 254, 178),
  wire(51, 284, 96, 309), wire(64, 350, 96, 324),
  wire(122, 310, 149, 318), wire(122, 324, 149, 324),
  wire(173, 321, 197, 421, 74),
  wire(221, 419, 237, 422), wire(221, 425, 237, 422),
  wire(279, 182, 316, 159), wire(279, 182, 313, 214), wire(279, 182, 313, 269, 62), wire(279, 182, 319, 325, 106),
  wire(255, 422, 324, 379), wire(255, 422, 321, 434),
  ...rows.flatMap(({ a, m, s, t, s2, out, end, end2 }) => [
    wire(a[0] + a[2], a[1] + 11, m[0], m[1] + 5),
    wire(s[0] + s[2], s[1] + 4, m[0], m[1] + 11),
    wire(m[0] + m[2], m[1] + 8, t[0], t[1] + 11),
    wire(m[0] + m[2], m[1] + 8, t[0], t[1] + 16),
    wire(t[0] + t[2], out, end[0], end[1]),
    wire(s2[0] + s2[2], s2[1] + 4, end2[0], end2[1]),
  ]),
  wire(340, 165, 403, 165),
];

const Node = ({ box: [x, y, w, h], tint }: { box: Box; tint?: boolean }) => (
  <g stroke="#444" strokeWidth={1}>
    <rect x={x + 0.5} y={y + 0.5} width={w} height={h} rx={1.5} fill={tint ? "#9493a8" : "url(#nodeFace)"} />
    <rect x={x + w / 2 - 3.5} y={y + 1} width={8} height={h - 1} rx={1.5} fill="#333" stroke="#111" />
  </g>
);

const Slider = ({ box: [x, y, w, h], knob }: { box: Box; knob: number }) => (
  <g stroke="#444">
    <rect x={x + 0.5} y={y + 0.5} width={w} height={h} rx={1} fill="#d6d6d6" />
    <rect x={x + 0.5} y={y + 0.5} width={knob} height={h} rx={1} fill="#9090a5" />
  </g>
);

/* ---------- app ---------- */

export default function App() {
  return (
    <Desktop>
      <Global />
      <TitleBar>
        <Haze>
          <HazeTab $color="transparent"><HazeBar $lead /></HazeTab>
          <HazeTab $color="#f2c53a"><HazeBar /></HazeTab>
          <HazeTab $color="#f2b83a"><HazeBar /></HazeTab>
          <HazeTab $color="#86c9a4"><HazeBar /></HazeTab>
          <HazeTab $color="#b5573a"><HazeBar /></HazeTab>
        </Haze>
        <LogoBox>
          <Icon size={16}>
            <path d="M1 5l5 4 6-1 3-3 3 2-1 4-5 2-4 5-3-3-4-1 2-3-2-2z" fill="#eee" stroke="none" />
            <path d="M9 10l3 1" stroke="#333" />
          </Icon>
        </LogoBox>
        <TitleText>Untitled - Rhinoceros Educational Lab License (64-bit) - [Top]</TitleText>
      </TitleBar>
      <MenuBar>
        {rhinoMenus.map((m) => <MenuItem key={m}>{m}</MenuItem>)}
      </MenuBar>
      <CommandArea>
        <History>
          <p>Drag objects, tap Alt to make a duplicate, press and hold Alt to temporarily toggle osnaps:</p>
          <p>Drag objects, tap Alt to make a duplicate, press and hold Alt to temporarily toggle osnaps:</p>
        </History>
        <Prompt>Command:<input type="text" /></Prompt>
      </CommandArea>
      <TabStrip>
        {toolTabs.map((t, i) => <ToolTab key={t} $active={i === 0}>{t}</ToolTab>)}
      </TabStrip>
      <ToolRowBand>
        <ToolRow>
          {standardTools.map((t) => (
            <ToolButton key={t.name} $more={t.more} aria-label={t.name}><Icon size={19}>{t.art}</Icon></ToolButton>
          ))}
        </ToolRow>
      </ToolRowBand>
      <WorkArea>
        <SideBar>
          <Grip />
          <SideGrid>
            {sideTools.map((t) => (
              <ToolButton key={t.name} $more={t.more} aria-label={t.name}><Icon size={18}>{t.art}</Icon></ToolButton>
            ))}
          </SideGrid>
        </SideBar>
        <ViewColumn>
          <Viewport>
            <Scene>
              <defs>
                <radialGradient id="greyBall" cx="0.35" cy="0.3"><stop offset="0" stopColor="#fff" /><stop offset="1" stopColor="#777" /></radialGradient>
                <radialGradient id="blueBall" cx="0.35" cy="0.3"><stop offset="0" stopColor="#cfe0ff" /><stop offset="0.4" stopColor="#2a58d8" /><stop offset="1" stopColor="#0a1c78" /></radialGradient>
                <linearGradient id="nodeFace" x2="0" y2="1"><stop offset="0" stopColor="#e4e4e4" /><stop offset="1" stopColor="#c4c4c4" /></linearGradient>
              </defs>
              <g shapeRendering="crispEdges">
                {gridLines.filter((n) => n !== 0).map((n) => {
                  const color = n % 10 === 0 ? "#8a9199" : "#959ca4";
                  const x = Math.round(ORIGIN.x + n * CELL);
                  const y = Math.round(ORIGIN.y + n * CELL);
                  return (
                    <g key={n} stroke={color}>
                      <line x1={x} x2={x} y1={0} y2="100%" />
                      <line y1={y} y2={y} x1={0} x2="100%" />
                    </g>
                  );
                })}
                <line x1={0} x2={ORIGIN.x} y1={ORIGIN.y} y2={ORIGIN.y} stroke="#7c838c" />
                <line x1={ORIGIN.x} x2={ORIGIN.x} y1={ORIGIN.y} y2="100%" stroke="#7c838c" />
                <line x1={ORIGIN.x} x2={ORIGIN.x} y1={0} y2={ORIGIN.y} stroke="#3f9440" />
                <line x1={ORIGIN.x} x2="100%" y1={ORIGIN.y} y2={ORIGIN.y} stroke="#a52f35" />
              </g>
              {rooms.map((r, i) => (
                <circle key={i} cx={r.x} cy={r.y} r={r.r} fill="rgba(208,80,82,0.55)" stroke="#9c1f27" />
              ))}
              {links.map(([a, b], i) => (
                <line key={i} x1={rooms[a].x} y1={rooms[a].y} x2={rooms[b].x} y2={rooms[b].y} stroke="#8f1a21" />
              ))}
              {rooms.map((r, i) => (
                <g key={i}>
                  <text x={r.x} y={r.y} fontSize={r.size} fill="#fff">{r.label}</text>
                  <path d={`M${r.x - 3} ${r.y - 3}l6 6m0-6l-6 6`} stroke="#980006" strokeWidth={3} />
                </g>
              ))}
              <path d="M31 618v26h25" stroke="#444a52" fill="none" shapeRendering="crispEdges" />
              <text x={32} y={621} fontSize={12} fill="#3f454d" fontFamily="Open Sans">y</text>
              <text x={57} y={646} fontSize={12} fill="#3f454d" fontFamily="Open Sans">x</text>
            </Scene>
            <ViewName>Top<Caret /></ViewName>
          </Viewport>
          <ViewTabs>
            <ViewTab>Perspective</ViewTab>
            <ViewTab $active>Top</ViewTab>
            <ViewTab>Front</ViewTab>
            <ViewTab>Right</ViewTab>
            <AddTab aria-label="Add viewport">
              <Svg $size={9} viewBox="0 0 9 9"><path d="M3.5 1h2v2.500H8v2H5.500V8h-2V5.500H1v-2h2.500z" fill="#fff" stroke="#444" /></Svg>
            </AddTab>
          </ViewTabs>
        </ViewColumn>
      </WorkArea>

      <BackControls>
        <Svg viewBox="0 0 110 110" $size={110} fill="none" stroke="#3f4a33">
          <path d="M28 0v8M61 0v8" stroke="#7e9560" />
          <path d="M37 7V4h14v3M41 3V1h13v6" strokeWidth={1.4} />
          <path d="M75 3l9 9M87 3l-9 9M75 3h4l2 2 2-2h4" />
        </Svg>
      </BackControls>

      <Hopper>
        <HopperTitle><h2>Grasshopper - unnamed</h2></HopperTitle>
        <HopperBody>
          <HopperMenu>
            {hopperMenus.map((m) => <MenuItem key={m}>{m}</MenuItem>)}
          </HopperMenu>
          <HopperTabs>
            {hopperTabs.map((t) => (
              <HopperTab key={t} $tone={t === "Curve" ? "active" : t === "Surface" ? "hover" : undefined}>{t}</HopperTab>
            ))}
          </HopperTabs>
          <Ribbon>
            {ribbon.map((g) => (
              <Group key={g.name}>
                <GroupIcons>
                  {g.cols.map((c, i) =>
                    c ? (
                      <IconColumn key={i}>
                        {c.map((k) => (
                          <RibbonButton key={k} aria-label={k}><Icon size={18}>{ribbonIcons[k]}</Icon></RibbonButton>
                        ))}
                      </IconColumn>
                    ) : (
                      <Rule key={i} />
                    )
                  )}
                </GroupIcons>
                <GroupName><span>{g.name}</span><b>+</b></GroupName>
              </Group>
            ))}
          </Ribbon>
          <CanvasBar>
            <BarButton aria-label="Open">
              <Icon>
                <path d="M5 3l10-2 3 3v9H5z" fill="#fff" stroke="#667" />
                <path d="M2 9h6l2-2h7v11H2z" fill="#5fc043" stroke="#2f7a1e" />
              </Icon>
            </BarButton>
            <BarButton aria-label="Save">
              <Icon>
                <path d="M1 1h18v18H4l-3-3z" fill="#2a6fe0" stroke="#123a86" />
                <path d="M4 1h12v9H4z" fill="#e9f1fb" stroke="#7aa0d8" />
                <path d="M6 4h8M6 7h8" stroke="#9ab" />
                <path d="M6 12h9v7H6z" fill="#d8dde5" stroke="#345" />
                <path d="M8 13h3v5H8z" fill="#234" stroke="none" />
              </Icon>
            </BarButton>
            <ZoomBox>
              <select aria-label="Zoom" defaultValue="41%"><option>41%</option></select>
              <Caret $size={4} />
            </ZoomBox>
            <BarButton aria-label="Zoom extents">
              <Icon>
                <path d="M3 7V3h4M13 3h4v4M17 13v4h-4M7 17H3v-4M9 3h2M9 17h2M3 9v2M17 9v2" strokeWidth={2.6} stroke="#111" />
                <path d="M8 8l4 4m0-4l-4 4" strokeWidth={1.6} stroke="#111" />
              </Icon>
              <Caret />
            </BarButton>
            <BarButton aria-label="Preview">
              <Icon>
                <path d="M1 10c5-8 13-8 18 0-5 7-13 7-18 0z" fill="#e8f6fc" stroke="#123" strokeWidth={1.4} />
                <circle cx={10} cy={9.5} r={5} fill="#35a3d8" stroke="#0d4a78" />
                <circle cx={10} cy={9.5} r={2} fill="#012" stroke="#cde" />
              </Icon>
              <Caret />
            </BarButton>
            <BarButton aria-label="Sketch">
              <Icon>
                <path d="M2 8c4-3 4 1 2 5s0 6 5 3" strokeWidth={1.4} />
                <path d="M8 17l1-7 8-8 2 8-6 7z" fill="#e02d1c" stroke="#8a140b" />
                <path d="M9 10l8-8v5l-6 6z" fill="#ffb09c" stroke="none" />
                <path d="M7 18l2-6 3 3z" fill="#f4d7a0" />
              </Icon>
            </BarButton>
          </CanvasBar>
          <Canvas>
            <Scene>
              <line x1={0} x2="100%" y1={64.5} y2={64.5} stroke="#77756f" />
              <g fill="none" stroke="#55534e" strokeWidth={0.9}>
                {wires.map((d, i) => <path key={i} d={d} />)}
              </g>
              {params.map((b, i) => (
                <rect key={i} x={b[0] + 0.5} y={b[1] + 0.5} width={b[2]} height={b[3]} rx={1.5} fill="#dcdcdc" stroke="#444" />
              ))}
              {capsules.map((b, i) => <Node key={i} box={b} />)}
              {clusters.map((b, i) => <Node key={i} box={b} tint />)}
              {rows.map((r, i) => (
                <g key={i}>
                  <Node box={r.a} />
                  <Node box={r.m} />
                  <Node box={r.t} />
                  {r.e && <Node box={r.e} />}
                  <Slider box={r.s} knob={19} />
                  <Slider box={r.s2} knob={13} />
                </g>
              ))}
            </Scene>
            <Gadget>
              <BarButton aria-label="Cluster">
                <Icon size={22}><path d="M10 3v14M4 7l12 7M16 7L4 14" stroke="#777" /><Dots r={1.8} at={[[10, 3], [10, 17], [4, 6], [16, 6], [4, 14], [16, 14]]} /><Dots r={2} fill="#ccc" at={[[10, 10]]} /></Icon>
              </BarButton>
              <BarButton aria-label="Scribble">
                <Icon size={22}><rect x={1} y={1} width={18} height={18} rx={1} fill="#ffcf33" stroke="#6b4a00" /><path d="M3 15l3-3v4l4-7-1 7 4-9-1 8 4-9-1 7" stroke="#b35a00" strokeWidth={1.5} /></Icon>
              </BarButton>
              <BarButton aria-label="Wrench">
                <Icon size={22}><path d="M1 10l4-9h10l4 9-4 9H5z" fill="#1c1c1c" stroke="#000" /><path d="M6 14l8-8" stroke="#fff" strokeWidth={2} /><circle cx={6} cy={14} r={2} fill="#fff" stroke="none" /><circle cx={14} cy={6} r={2} fill="#fff" stroke="none" /></Icon>
              </BarButton>
              <BarButton aria-label="Clear">
                <Icon size={22}><path d="M1 10l4-9h10l4 9-4 9H5z" fill="#1c1c1c" stroke="#000" /><path d="M7 7l6 6m0-6l-6 6" stroke="#fff" strokeWidth={2.5} /></Icon>
              </BarButton>
              <BarButton aria-label="Digits">
                <Icon size={22}><path d="M1 10l4-9h10l4 9-4 9H5z" fill="#1c1c1c" stroke="#000" /><text x={3} y={14} fontSize={11} fill="#fff" stroke="none" fontFamily="Liberation Serif">0.1</text></Icon>
              </BarButton>
            </Gadget>
          </Canvas>
          <Status>...</Status>
        </HopperBody>
      </Hopper>
    </Desktop>
  );
}
